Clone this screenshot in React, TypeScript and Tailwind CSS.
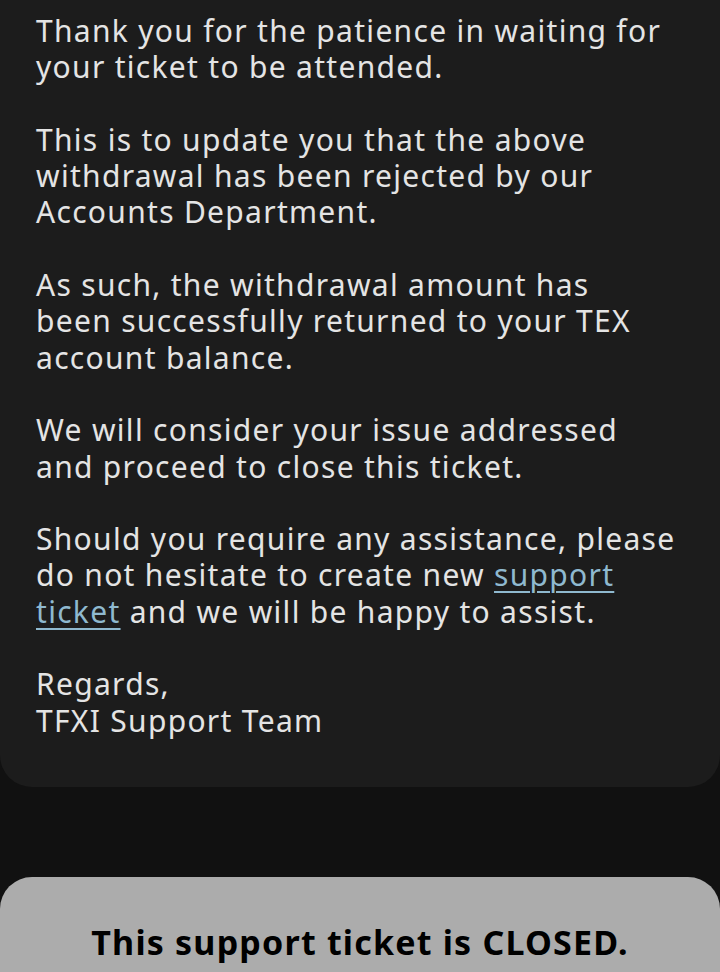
export default function App() {
  const paras: React.ReactNode[] = [
    <>Thank you for the patience in waiting for<br />your ticket to be attended.</>,
    <>This is to update you that the above<br />withdrawal has been rejected by our<br />Accounts Department.</>,
    <>As such, the withdrawal amount has<br />been successfully returned to your TEX<br />account balance.</>,
    <>We will consider your issue addressed<br />and proceed to close this ticket.</>,
    <>Should you require any assistance, please<br />do not hesitate to create new <a className="text-[#8fb9cf] underline underline-offset-[5px] decoration-[2px]">support<br />ticket</a> and we will be happy to assist.</>,
    <>Regards,<br />TFXI Support Team</>,
  ];
  return (
    <div className="w-[720px] h-[972px] overflow-hidden bg-[#111111] flex flex-col" style={{ fontFamily: '"Noto Sans", sans-serif' }}>
      <div className="bg-[#1c1c1c] rounded-b-[32px] pl-[36px] pr-2 pt-[13px] pb-[48px] flex flex-col gap-[36.3px] text-[#e4e4e4] text-[30px] leading-[36.3px] tracking-[1.3px] whitespace-nowrap">
        {paras.map((p, i) => (
          <p key={i}>{p}</p>
        ))}
      </div>
      <div className="h-[90px] shrink-0" />
      <div className="flex-1 bg-[#acacac] rounded-t-[32px] flex justify-center pt-[46px]">
        <div className="text-black font-bold text-[34px] leading-[38px] tracking-[1.2px] whitespace-nowrap">This support ticket is CLOSED.</div>
      </div>
    </div>
  );
}
